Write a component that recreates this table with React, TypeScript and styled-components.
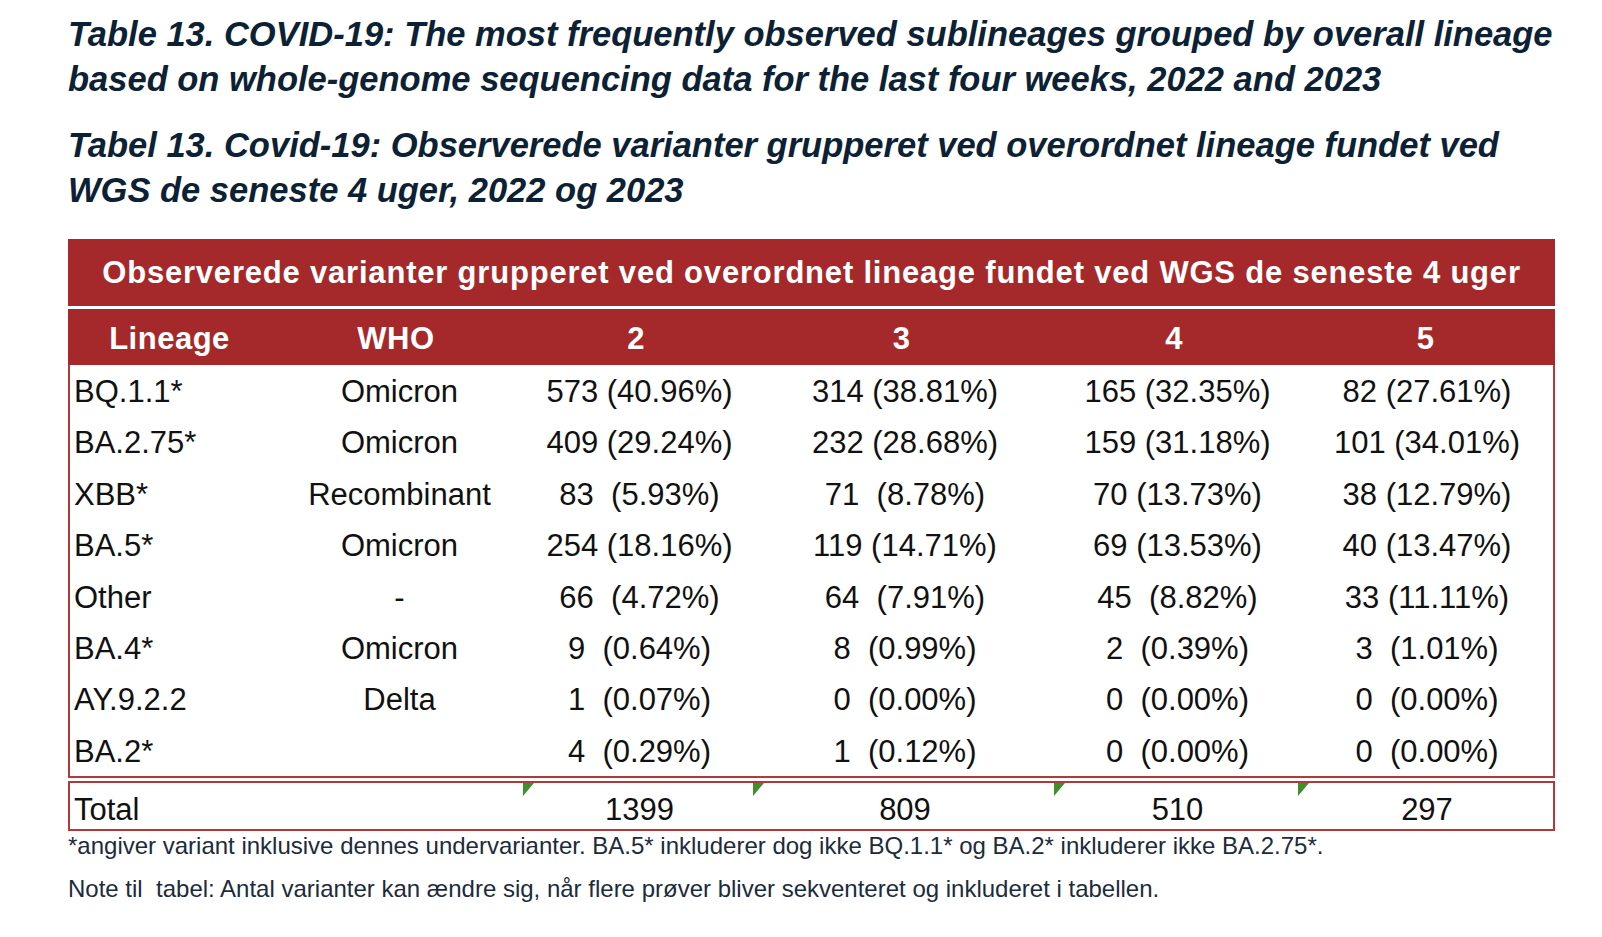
import styled, { createGlobalStyle } from "styled-components";

const GlobalStyle = createGlobalStyle`
  html, body {
    margin: 0;
    padding: 0;
    background: #ffffff;
  }
  body {
    font-family: "Liberation Sans", Arial, sans-serif;
  }
`;

const RED = "#a5292a";
const BORDER = "#b3383a";
const COLS = "203px 250px 230px 301px 244px 1fr";

const Page = styled.div`
  padding: 12px 0 0 68px;
  width: 1500px;
`;

const Caption = styled.h2<{ gap?: number }>`
  margin: 0 0 ${(p) => p.gap ?? 0}px;
  font-family: "Liberation Sans", Arial, sans-serif;
  font-style: italic;
  font-weight: 700;
  font-size: 34.5px;
  line-height: 45px;
  color: #0d2134;
  white-space: nowrap;
`;

const Table = styled.div`
  width: 1487px;
`;

const Band = styled.div`
  height: 67px;
  background: ${RED};
  color: #ffffff;
  display: flex;
  align-items: center;
  justify-content: center;
  font-weight: 700;
  font-size: 31px;
  letter-spacing: 0.8px;
  white-space: nowrap;
`;

const HeaderRow = styled.div`
  margin-top: 3px;
  height: 56px;
  background: ${RED};
  display: grid;
  grid-template-columns: ${COLS};
`;

const HeaderCell = styled.div`
  color: #ffffff;
  font-weight: 700;
  font-size: 31px;
  letter-spacing: 0.5px;
  padding-top: 3px;
  display: flex;
  align-items: center;
  justify-content: center;
`;

const Body = styled.div`
  border-left: 2px solid ${BORDER};
  border-right: 2px solid ${BORDER};
  border-bottom: 2px solid ${BORDER};
`;

const Row = styled.div`
  display: grid;
  grid-template-columns: ${COLS};
  height: 51.4px;
`;

const Cell = styled.div<{ $left?: boolean }>`
  position: relative;
  font-size: 31px;
  line-height: 53px;
  color: #111111;
  white-space: pre;
  text-align: ${(p) => (p.$left ? "left" : "center")};
  padding-left: ${(p) => (p.$left ? "4px" : "3px")};
`;

const TotalRow = styled(Row)`
  box-sizing: border-box;
  margin-top: 3px;
  border: 2px solid ${BORDER};
  height: 50px;
`;

const TotalCell = styled(Cell)`
  line-height: 54px;
`;

const Flag = styled.span`
  position: absolute;
  left: 0;
  top: 0;
  width: 0;
  height: 0;
  border-top: 13px solid #3f8f2b;
  border-right: 11px solid transparent;
`;

const Note = styled.p<{ gap?: number }>`
  margin: ${(p) => p.gap ?? 0}px 0 0;
  font-size: 24px;
  line-height: 30px;
  color: #1d2b3b;
  white-space: pre;
`;

const header = ["Lineage", "WHO", "2", "3", "4", "5"];

const rows: string[][] = [
  ["BQ.1.1*", "Omicron", "573 (40.96%)", "314 (38.81%)", "165 (32.35%)", "82 (27.61%)"],
  ["BA.2.75*", "Omicron", "409 (29.24%)", "232 (28.68%)", "159 (31.18%)", "101 (34.01%)"],
  ["XBB*", "Recombinant", "83  (5.93%)", "71  (8.78%)", "70 (13.73%)", "38 (12.79%)"],
  ["BA.5*", "Omicron", "254 (18.16%)", "119 (14.71%)", "69 (13.53%)", "40 (13.47%)"],
  ["Other", "-", "66  (4.72%)", "64  (7.91%)", "45  (8.82%)", "33 (11.11%)"],
  ["BA.4*", "Omicron", "9  (0.64%)", "8  (0.99%)", "2  (0.39%)", "3  (1.01%)"],
  ["AY.9.2.2", "Delta", "1  (0.07%)", "0  (0.00%)", "0  (0.00%)", "0  (0.00%)"],
  ["BA.2*", "", "4  (0.29%)", "1  (0.12%)", "0  (0.00%)", "0  (0.00%)"],
];

const totals = ["1399", "809", "510", "297"];

export default function App() {
  return (
    <>
      <GlobalStyle />
      <Page>
        <Caption gap={21}>
          Table 13. COVID-19: The most frequently observed sublineages grouped by overall lineage
          <br />
          based on whole-genome sequencing data for the last four weeks, 2022 and 2023
        </Caption>
        <Caption gap={26}>
          Tabel 13. Covid-19: Observerede varianter grupperet ved overordnet lineage fundet ved
          <br />
          WGS de seneste 4 uger, 2022 og 2023
        </Caption>

        <Table>
          <Band>Observerede varianter grupperet ved overordnet lineage fundet ved WGS de seneste 4 uger</Band>
          <HeaderRow>
            {header.map((h) => (
              <HeaderCell key={h}>{h}</HeaderCell>
            ))}
          </HeaderRow>
          <Body>
            {rows.map((r) => (
              <Row key={r[0]}>
                {r.map((c, i) => (
                  <Cell key={i} $left={i === 0}>
                    {c}
                  </Cell>
                ))}
              </Row>
            ))}
          </Body>
          <TotalRow>
            <TotalCell $left>Total</TotalCell>
            <TotalCell />
            {totals.map((t) => (
              <TotalCell key={t}>
                <Flag />
                {t}
              </TotalCell>
            ))}
          </TotalRow>
        </Table>

        <Note gap={0}>
          *angiver variant inklusive dennes undervarianter. BA.5* inkluderer dog ikke BQ.1.1* og BA.2* inkluderer ikke BA.2.75*.
        </Note>
        <Note gap={13}>
          Note til  tabel: Antal varianter kan ændre sig, når flere prøver bliver sekventeret og inkluderet i tabellen.
        </Note>
      </Page>
    </>
  );
}
